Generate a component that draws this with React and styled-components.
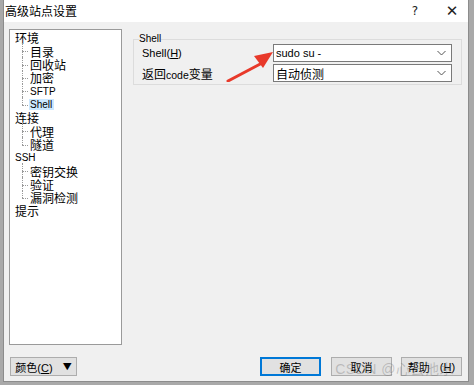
import React from 'react';
import styled, { createGlobalStyle } from 'styled-components';

const GlobalStyle = createGlobalStyle`
  html, body {
    margin: 0;
    padding: 0;
    background: #a9a9a9;
  }
  body {
    font-family: "Noto Sans CJK SC", "DejaVu Sans", sans-serif;
    font-size: 12px;
    color: #000;
  }
`;

const Window = styled.div`
  margin-left: 3px;
  width: 466px;
  height: 382px;
  box-sizing: border-box;
  border: 1px solid #8c8c8c;
  border-top: none;
  background: #f0f0f0;
  display: flex;
  flex-direction: column;
`;

const TitleBar = styled.div`
  height: 22px;
  background: #fff;
  display: flex;
  align-items: center;
  padding-left: 1px;
  font-size: 12px;
`;

const Title = styled.div`
  flex: 1;
  line-height: 22px;
`;

const TitleButton = styled.div`
  width: ${p => p.$w}px;
  text-align: center;
  font-size: ${p => p.$size}px;
  font-family: "DejaVu Sans", sans-serif;
  color: #222;
`;

const Body = styled.div`
  flex: 1;
  display: flex;
  flex-direction: column;
  padding: 7px 6px 4px 5px;
`;

const Main = styled.div`
  display: flex;
  gap: 6px;
  height: 316px;
`;

const Tree = styled.div`
  width: 113px;
  box-sizing: border-box;
  background: #fff;
  border: 1px solid #9a9a9a;
  padding: 1px 0 0 5px;
`;

const Root = styled.div`
  height: 13.35px;
  line-height: 13.35px;
  font-size: ${p => (p.$latin ? 10 : 12)}px;
  font-family: ${p => (p.$latin ? '"Liberation Sans", sans-serif' : 'inherit')};
`;

const Children = styled.div`
  position: relative;
  margin-left: 7px;
`;

const Child = styled.div`
  position: relative;
  height: 13.35px;
  display: flex;
  align-items: center;
  padding-left: 7px;

  &::before {
    content: '';
    position: absolute;
    left: 0;
    top: 7px;
    width: 6px;
    border-top: 1px dotted #9a9a9a;
  }
  &::after {
    content: '';
    position: absolute;
    left: 0;
    top: -1px;
    height: ${p => (p.$last ? 8 : 14)}px;
    border-left: 1px dotted #9a9a9a;
  }
`;

const ChildLabel = styled.span`
  font-size: ${p => (p.$latin ? 10 : 12)}px;
  font-family: ${p => (p.$latin ? '"Liberation Sans", sans-serif' : 'inherit')};
  line-height: 11px;
  padding: 0 2px 0 1px;
  background: ${p => (p.$selected ? '#cce8ff' : 'transparent')};
`;

const Panel = styled.div`
  flex: 1;
  padding-top: 5px;
`;

const GroupBox = styled.fieldset`
  margin: 0 0 0 5px;
  border: 1px solid #dcdcdc;
  padding: 0 9px 5px 8px;
  display: grid;
  grid-template-columns: 131px 1fr;
  row-gap: 2px;
  align-items: center;
  height: 51px;
  box-sizing: border-box;
  position: relative;
`;

const Legend = styled.legend`
  font-family: "Liberation Sans", sans-serif;
  font-size: 10px;
  padding: 0;
  margin-left: -3px;
  line-height: 10px;
`;

const FieldLabel = styled.div`
  font-size: 12px;
  font-family: ${p => (p.$latin ? '"Liberation Sans", "Noto Sans CJK SC", sans-serif' : 'inherit')};
  ${p => p.$latin && 'font-size: 11px;'}
`;

const Latin = styled.span`
  font-family: "Liberation Sans", sans-serif;
  font-size: 10.5px;
`;

const Combo = styled.div`
  height: 18px;
  box-sizing: border-box;
  border: 1px solid #7a7a7a;
  background: #fff;
  display: flex;
  align-items: center;
  padding: 0 5px 0 2px;
  font-size: ${p => (p.$latin ? 11 : 12)}px;
  font-family: ${p => (p.$latin ? '"Liberation Sans", sans-serif' : 'inherit')};
`;

const ComboText = styled.span`
  flex: 1;
`;

const Arrow = styled.svg`
  position: absolute;
  left: 92px;
  top: 6px;
  pointer-events: none;
`;

const BottomRow = styled.div`
  margin-top: 12px;
  display: flex;
  align-items: center;
  position: relative;
`;

const Button = styled.div`
  height: 19px;
  width: ${p => p.$w}px;
  box-sizing: border-box;
  background: #e1e1e1;
  border: 1px solid ${p => (p.$default ? '#0078d7' : '#adadad')};
  box-shadow: ${p => (p.$default ? 'inset 0 0 0 1px #0078d7' : 'none')};
  display: flex;
  align-items: center;
  justify-content: center;
  font-size: 11px;
  white-space: nowrap;
  margin-left: ${p => p.$ml || 0}px;
  gap: 10px;
`;

const Paren = styled.span`
  font-family: "Liberation Sans", sans-serif;
  font-size: 11px;
`;

const Spacer = styled.div`
  flex: 1;
`;

const Watermark = styled.div`
  position: absolute;
  right: 8px;
  top: 1px;
  font-family: "Liberation Sans", "Noto Sans CJK SC", sans-serif;
  font-size: 14px;
  color: rgba(110, 110, 110, 0.35);
  letter-spacing: 0.5px;
  white-space: nowrap;
  pointer-events: none;
`;

const Chevron = () => (
  <svg width="9" height="6" viewBox="0 0 9 6">
    <path d="M0.5 1 L4.5 5 L8.5 1" fill="none" stroke="#555" strokeWidth="1" />
  </svg>
);

const U = styled.span`
  text-decoration: underline;
  text-underline-offset: 1px;
`;

const tree = [
  { label: '环境', children: ['目录', '回收站', '加密', 'SFTP', 'Shell'] },
  { label: '连接', children: ['代理', '隧道'] },
  { label: 'SSH', latin: true, children: ['密钥交换', '验证', '漏洞检测'] },
  { label: '提示', children: [] },
];

const isLatin = s => /^[A-Za-z]+$/.test(s);

export default function App() {
  return (
    <>
      <GlobalStyle />
      <Window>
        <TitleBar>
          <Title>高级站点设置</Title>
          <TitleButton $w={42} $size={12}>?</TitleButton>
          <TitleButton $w={32} $size={15}>✕</TitleButton>
        </TitleBar>
        <Body>
          <Main>
            <Tree>
              {tree.map(node => (
                <div key={node.label}>
                  <Root $latin={node.latin}>{node.label}</Root>
                  {node.children.length > 0 && (
                    <Children>
                      {node.children.map((c, i) => (
                        <Child key={c} $last={i === node.children.length - 1}>
                          <ChildLabel $latin={isLatin(c)} $selected={c === 'Shell'}>{c}</ChildLabel>
                        </Child>
                      ))}
                    </Children>
                  )}
                </div>
              ))}
            </Tree>
            <Panel>
              <GroupBox>
                <Legend>Shell</Legend>
                <FieldLabel $latin>Shell(<U>H</U>)</FieldLabel>
                <Combo $latin>
                  <ComboText>sudo su -</ComboText>
                  <Chevron />
                </Combo>
                <FieldLabel>返回<Latin>code</Latin>变量</FieldLabel>
                <Combo>
                  <ComboText>自动侦测</ComboText>
                  <Chevron />
                </Combo>
                <Arrow width="60" height="32" viewBox="0 0 60 32">
                  <path d="M2 31 L38 12" stroke="#e8392a" strokeWidth="3" strokeLinecap="round" />
                  <path d="M47 2 L28 6 L37 18 Z" fill="#e8392a" />
                </Arrow>
              </GroupBox>
            </Panel>
          </Main>
          <BottomRow>
            <Button $w={67} $ml={1}>
              <span>颜色<Paren>(<U>C</U>)</Paren></span>
              <span style={{ fontSize: 9 }}>▼</span>
            </Button>
            <Spacer />
            <Button $w={61} $default>确定</Button>
            <Button $w={61} $ml={10}>取消</Button>
            <Button $w={61} $ml={9}>帮助<Paren>(<U>H</U>)</Paren></Button>
            <Watermark>CSDN @心云池水</Watermark>
          </BottomRow>
        </Body>
      </Window>
    </>
  );
}
